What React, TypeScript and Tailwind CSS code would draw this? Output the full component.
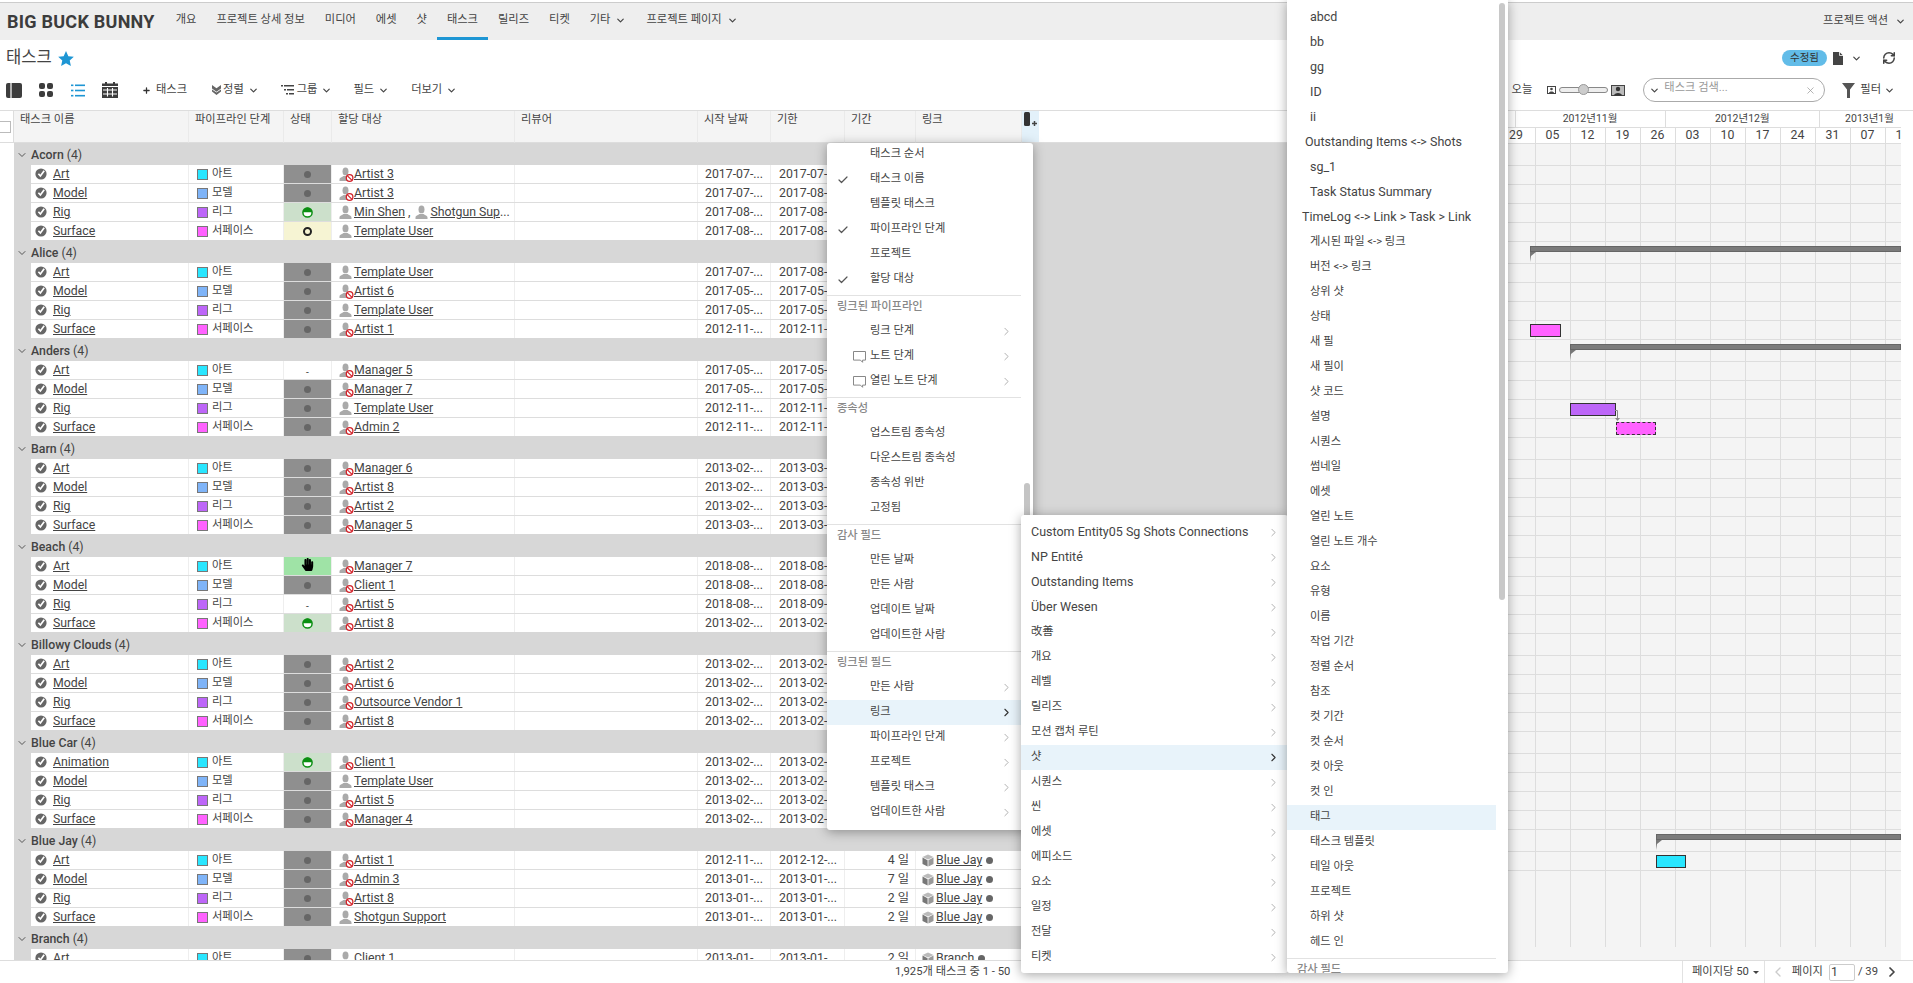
import { type ReactNode } from "react";
import { Check, ChevronDown, ChevronRight, ChevronLeft, RefreshCw, X, Plus } from "lucide-react";
import { FaHandPaper } from "react-icons/fa";

type Status = "off" | "ip" | "wtg" | "hover" | "na";
type Step = "art" | "model" | "rig" | "surface";
type Row = { name: string; step: Step; status?: Status; who: string; blocked?: boolean; start: string; due: string; days?: string; link?: string; who2?: string };
type Group = { name: string; rows: Row[] };

const steps: Record<Step, { label: string; swatch: string }> = {
  art: { label: "아트", swatch: "bg-[#29e6ff]" },
  model: { label: "모델", swatch: "bg-[#7fb4f8]" },
  rig: { label: "리그", swatch: "bg-[#bd66f8]" },
  surface: { label: "서페이스", swatch: "bg-[#ff62ff]" },
};

function four(
  who: [string, boolean, Status?][],
  dates: [string, string][],
  extra?: { days: string; link: string }[],
  first = "Art",
): Row[] {
  const names = [first, "Model", "Rig", "Surface"];
  const keys: Step[] = ["art", "model", "rig", "surface"];
  return who.map((w, i) => ({
    name: names[i], step: keys[i], who: w[0], blocked: w[1], status: w[2],
    start: dates[i][0], due: dates[i][1], days: extra?.[i].days, link: extra?.[i].link,
  }));
}

const same = (a: string, b: string): [string, string][] => [[a, b], [a, b], [a, b], [a, b]];

const groups: Group[] = [
  { name: "Acorn", rows: (() => {
    const r = four(
      [["Artist 3", true], ["Artist 3", true], ["Min Shen", false, "ip"], ["Template User", false, "wtg"]],
      [["2017-07", "2017-07"], ["2017-07", "2017-08"], ["2017-08", "2017-08"], ["2017-08", "2017-08"]],
    );
    r[2].who2 = "Shotgun Sup";
    return r;
  })() },
  { name: "Alice", rows: four(
    [["Template User", false], ["Artist 6", true], ["Template User", false], ["Artist 1", true]],
    [["2017-07", "2017-08"], ["2017-05", "2017-05"], ["2017-05", "2017-05"], ["2012-11", "2012-11"]],
  ) },
  { name: "Anders", rows: four(
    [["Manager 5", true, "na"], ["Manager 7", true], ["Template User", false], ["Admin 2", true]],
    [["2017-05", "2017-05"], ["2017-05", "2017-05"], ["2012-11", "2012-11"], ["2012-11", "2012-11"]],
  ) },
  { name: "Barn", rows: four(
    [["Manager 6", true], ["Artist 8", true], ["Artist 2", true], ["Manager 5", true]],
    [["2013-02", "2013-03"], ["2013-02", "2013-03"], ["2013-02", "2013-03"], ["2013-03", "2013-03"]],
  ) },
  { name: "Beach", rows: four(
    [["Manager 7", true, "hover"], ["Client 1", true], ["Artist 5", true, "na"], ["Artist 8", true, "ip"]],
    [["2018-08", "2018-08"], ["2018-08", "2018-08"], ["2018-08", "2018-09"], ["2013-02", "2013-02"]],
  ) },
  { name: "Billowy Clouds", rows: four(
    [["Artist 2", true], ["Artist 6", true], ["Outsource Vendor 1", true], ["Artist 8", true]],
    same("2013-02", "2013-02"),
  ) },
  { name: "Blue Car", rows: four(
    [["Client 1", true, "ip"], ["Template User", false], ["Artist 5", true], ["Manager 4", true]],
    same("2013-02", "2013-02"), undefined, "Animation",
  ) },
  { name: "Blue Jay", rows: four(
    [["Artist 1", true], ["Admin 3", true], ["Artist 8", true], ["Shotgun Support", false]],
    [["2012-11", "2012-12"], ["2013-01", "2013-01"], ["2013-01", "2013-01"], ["2013-01", "2013-01"]],
    [{ days: "4 일", link: "Blue Jay" }, { days: "7 일", link: "Blue Jay" }, { days: "2 일", link: "Blue Jay" }, { days: "2 일", link: "Blue Jay" }],
  ) },
  // only the first Branch row is on screen before the footer
  { name: "Branch", rows: [
    { name: "Art", step: "art", who: "Client 1", start: "2013-01", due: "2013-01", days: "2 일", link: "Branch" },
  ] },
];

type MenuEntry = { t: string; check?: boolean; more?: boolean; note?: boolean; head?: boolean; on?: boolean; shift?: string };

const fieldMenu: MenuEntry[] = [
  { t: "태스크 순서" }, { t: "태스크 이름", check: true }, { t: "템플릿 태스크" },
  { t: "파이프라인 단계", check: true }, { t: "프로젝트" }, { t: "할당 대상", check: true },
  { t: "링크된 파이프라인", head: true },
  { t: "링크 단계", more: true }, { t: "노트 단계", more: true, note: true }, { t: "열린 노트 단계", more: true, note: true },
  { t: "종속성", head: true },
  { t: "업스트림 종속성" }, { t: "다운스트림 종속성" }, { t: "종속성 위반" }, { t: "고정됨" },
  { t: "감사 필드", head: true },
  { t: "만든 날짜" }, { t: "만든 사람" }, { t: "업데이트 날짜" }, { t: "업데이트한 사람" },
  { t: "링크된 필드", head: true },
  { t: "만든 사람", more: true }, { t: "링크", more: true, on: true }, { t: "파이프라인 단계", more: true },
  { t: "프로젝트", more: true }, { t: "템플릿 태스크", more: true }, { t: "업데이트한 사람", more: true },
];

const linkMenu = [
  "Custom Entity05 Sg Shots Connections", "NP Entité", "Outstanding Items", "Über Wesen", "改善", "개요", "레벨", "릴리즈",
  "모션 캡처 루틴", "샷", "시퀀스", "씬", "에셋", "에피소드", "요소", "일정", "전달", "티켓",
];

const shotMenu: MenuEntry[] = [
  { t: "abcd" }, { t: "bb" }, { t: "gg" }, { t: "ID" }, { t: "ii" },
  { t: "Outstanding Items <-> Shots", shift: "-ml-[5px]" }, { t: "sg_1" }, { t: "Task Status Summary" },
  { t: "TimeLog <-> Link > Task > Link", shift: "-ml-[8px]" }, { t: "게시된 파일 <-> 링크" }, { t: "버전 <-> 링크" },
  { t: "상위 샷" }, { t: "상태" }, { t: "새 필" }, { t: "새 필이" }, { t: "샷 코드" }, { t: "설명" }, { t: "시퀀스" },
  { t: "썸네일" }, { t: "에셋" }, { t: "열린 노트" }, { t: "열린 노트 개수" }, { t: "요소" }, { t: "유형" }, { t: "이름" },
  { t: "작업 기간" }, { t: "정렬 순서" }, { t: "참조" }, { t: "컷 기간" }, { t: "컷 순서" }, { t: "컷 아웃" }, { t: "컷 인" },
  { t: "태그", on: true }, { t: "태스크 템플릿" }, { t: "테일 아웃" }, { t: "프로젝트" }, { t: "하위 샷" }, { t: "헤드 인" },
  { t: "감사 필드", head: true },
];

const navItems = ["개요", "프로젝트 상세 정보", "미디어", "에셋", "샷", "태스크", "릴리즈", "티켓", "기타", "프로젝트 페이지"];
const headers = [
  { t: "태스크 이름", w: "w-[175px]" }, { t: "파이프라인 단계", w: "w-[95px]" }, { t: "상태", w: "w-[48px]" },
  { t: "할당 대상", w: "w-[183px]" }, { t: "리뷰어", w: "w-[183px]" }, { t: "시작 날짜", w: "w-[73px]" },
  { t: "기한", w: "w-[74px]" }, { t: "기간", w: "w-[71px]" }, { t: "링크", w: "w-[106px]" },
];
const weeks = ["29", "05", "12", "19", "26", "03", "10", "17", "24", "31", "07", "14"];

const kr = "text-[11.25px]";
const en = "text-[12.3px]";
const sized = (t: string) => (/[가-힣改善]/.test(t) ? kr : "text-[12.5px]");

function Caret() {
  return <ChevronDown size={11} strokeWidth={2.6} className="shrink-0 text-[#444]" />;
}

function TaskIcon() {
  return (
    <svg width="12" height="12" viewBox="0 0 12 12" className="shrink-0">
      <circle cx="6" cy="6" r="5.6" fill="#666" />
      <path d="M3.4 5.8 5.4 8 9.2 2.8" fill="none" stroke="#fff" strokeWidth="1.7" />
    </svg>
  );
}

function Person({ blocked }: { blocked?: boolean }) {
  return (
    <svg width="15" height="15" viewBox="0 0 15 15" className="shrink-0">
      <ellipse cx="6.5" cy="4.4" rx="3" ry="3.9" fill="#aaa" />
      <path d="M0.5 14v-1.6c0-1.8 3-2.4 4-3.4h4c1 1 4 1.6 4 3.4V14z" fill="#aaa" />
      {blocked && (
        <g>
          <circle cx="10.6" cy="11" r="3.3" fill="#fff" stroke="#d2232a" strokeWidth="1.3" />
          <path d="M8.4 8.8 12.8 13.2" stroke="#d2232a" strokeWidth="1.2" />
        </g>
      )}
    </svg>
  );
}

function Cube() {
  return (
    <svg width="12" height="13" viewBox="0 0 12 13" className="shrink-0">
      <path d="M6 .5 11.5 3 6 5.6.5 3z" fill="#bbb" />
      <path d="M.5 3.6 5.6 6.2v6.3L.5 10z" fill="#777" />
      <path d="M11.5 3.6 6.4 6.2v6.3L11.5 10z" fill="#999" />
    </svg>
  );
}

function HalfDot() {
  return (
    <svg width="11" height="11" viewBox="0 0 11 11">
      <circle cx="5.5" cy="5.5" r="4.6" fill="#fff" stroke="#0b8f12" strokeWidth="1.5" />
      <path d="M.9 5.2a4.6 4.6 0 0 1 9.2 0z" fill="#0b8f12" />
    </svg>
  );
}

function StatusCell({ status = "off" }: { status?: Status }) {
  const base = "flex w-[48px] shrink-0 items-center justify-center border-r border-[#eee]";
  if (status === "ip") return <div className={`${base} bg-[#cce0cb]`}><HalfDot /></div>;
  if (status === "wtg") return <div className={`${base} bg-[#f6f4d3]`}><span className="h-[9px] w-[9px] rounded-full border-2 border-[#222]" /></div>;
  if (status === "hover") return <div className={`${base} bg-[#9fe3a6]`}><FaHandPaper size={13} className="-mt-[4px] text-black" /></div>;
  if (status === "na") return <div className={`${base} bg-white pt-[4px] text-[10px] text-[#444]`}>-</div>;
  return <div className={`${base} bg-[#8f8f8f]`}><span className="h-[7px] w-[7px] rounded-full bg-[#666]" /></div>;
}

function TaskRow({ row }: { row: Row }) {
  const step = steps[row.step];
  return (
    <div className={`ml-[17px] flex h-[19px] w-[991px] border-b border-[#ddd] bg-white ${en} text-[#444] last:border-[#d7d7d7]`}>
      <div className="flex w-[158px] shrink-0 items-center gap-[6px] border-r border-[#eee] pl-[4px]">
        <TaskIcon />
        <span className="pt-[1px] underline">{row.name}</span>
      </div>
      <div className="flex w-[95px] shrink-0 items-center gap-[4px] border-r border-[#eee] pl-[8px]">
        <span className={`h-[11px] w-[11px] border border-[#777] ${step.swatch}`} />
        <span className={kr}>{step.label}</span>
      </div>
      <StatusCell status={row.status} />
      <div className="flex w-[183px] shrink-0 items-center overflow-hidden whitespace-nowrap border-r border-[#eee] pl-[7px]">
        <Person blocked={row.blocked} />
        <span className="pt-[1px] underline">{row.who}</span>
        {row.who2 && (
          <>
            <span className="ml-[3px] mr-[5px]">,</span>
            <Person />
            <span className="pt-[1px] underline">{row.who2}</span>...
          </>
        )}
      </div>
      <div className="w-[183px] shrink-0 border-r border-[#eee]" />
      <div className="flex w-[73px] shrink-0 items-center border-r border-[#eee] pl-[7px] pt-[1px]">{row.start}-...</div>
      <div className="flex w-[74px] shrink-0 items-center border-r border-[#eee] pl-[8px] pt-[1px]">{row.due}-...</div>
      <div className="flex w-[71px] shrink-0 items-center justify-end border-r border-[#eee] pr-[6px]">{row.days}</div>
      <div className="flex w-[106px] shrink-0 items-center pl-[6px]">
        {row.link && (
          <>
            <Cube />
            <span className="ml-[2px] pt-[1px] underline">{row.link}</span>
            <span className="ml-[4px] h-[7px] w-[7px] rounded-full bg-[#666]" />
          </>
        )}
      </div>
    </div>
  );
}

function GroupBlock({ group }: { group: Group }) {
  return (
    <div>
      <div className={`flex h-[22px] items-center pt-[2px] ${en} text-[#444]`}>
        <ChevronDown size={12} strokeWidth={2} className="ml-[2px] text-[#555]" />
        <span className="ml-[3px] font-medium">{group.name}</span>
        <span className="ml-[3px]">(4)</span>
      </div>
      {group.rows.map((r, i) => <TaskRow key={i} row={r} />)}
    </div>
  );
}

function NoteIcon() {
  return (
    <svg width="13" height="12" viewBox="0 0 13 12">
      <path d="M.5.5h12v8.6H9.6v2.2L7.4 9.1H.5z" fill="#fff" stroke="#888" />
    </svg>
  );
}

function MenuHead({ t, inset }: { t: string; inset: string }) {
  return (
    <div className={`mt-[3px] flex h-[24px] items-center border-t border-[#e2e2e2] ${inset} ${kr} font-medium text-[#888]`}>{t}</div>
  );
}

function FieldItem({ e }: { e: MenuEntry }) {
  if (e.head) return <MenuHead t={e.t} inset="pl-[10px]" />;
  return (
    <div className={`flex h-[25px] shrink-0 items-center ${kr} text-[#444] ${e.on ? "bg-[#e8f3fa]" : ""}`}>
      <div className={`flex w-[43px] shrink-0 items-center ${e.note ? "justify-end pr-[4px]" : "pl-[10px]"}`}>
        {e.check && <Check size={12} strokeWidth={2.4} className="text-[#555]" />}
        {e.note && <NoteIcon />}
      </div>
      <span className="flex-1">{e.t}</span>
      {e.more && <ChevronRight size={13} strokeWidth={e.on ? 2 : 1.4} className={`mr-[8px] ${e.on ? "text-[#333]" : "text-[#999]"}`} />}
    </div>
  );
}

function FieldMenu() {
  return (
    <div className="absolute left-[827px] top-[143px] z-10 h-[687px] w-[206px] overflow-hidden rounded-[3px] bg-white shadow-[0_2px_12px_rgba(0,0,0,0.35)]">
      <div className="-mt-[1px] w-[194px]">
        {fieldMenu.map((e, i) => <FieldItem key={i} e={e} />)}
      </div>
      <div className="absolute left-[197px] top-[340px] h-[40px] w-[6px] rounded-full bg-[#c4c4c4]" />
    </div>
  );
}

function LinkMenu() {
  return (
    <div className="absolute left-[1021px] top-[515px] z-20 h-[458px] w-[267px] rounded-[3px] bg-white pt-[5px] shadow-[0_2px_12px_rgba(0,0,0,0.35)]">
      {linkMenu.map((t) => (
        <div key={t} className={`flex h-[25px] items-center pl-[10px] text-[#444] ${sized(t)} ${t === "샷" ? "bg-[#e8f3fa]" : ""}`}>
          <span className="flex-1">{t}</span>
          <ChevronRight size={13} strokeWidth={t === "샷" ? 2 : 1.4} className={`mr-[8px] ${t === "샷" ? "text-[#333]" : "text-[#999]"}`} />
        </div>
      ))}
    </div>
  );
}

function ShotMenu() {
  return (
    <div className="absolute left-[1287px] top-0 z-30 h-[973px] w-[221px] overflow-hidden rounded-b-[3px] bg-white pt-[5px] shadow-[0_2px_12px_rgba(0,0,0,0.35)]">
      <div className="w-[209px]">
        {shotMenu.map((e) => e.head ? (
          <MenuHead key={e.t} t={e.t} inset="pl-[10px]" />
        ) : (
          <div key={e.t} className={`flex h-[25px] items-center whitespace-nowrap pl-[23px] text-[#444] ${sized(e.t)} ${e.on ? "bg-[#e8f3fa]" : ""}`}>
            <span className={e.shift}>{e.t}</span>
          </div>
        ))}
      </div>
      <div className="absolute left-[212px] top-[3px] h-[597px] w-[6px] rounded-full bg-[#c8c8c8]" />
    </div>
  );
}

function Summary({ left }: { left: string }) {
  return (
    <div className={`absolute right-0 top-[4px] h-[16px] ${left}`}>
      <div className="h-[6px] border border-[#666] bg-[#7b7b7b]" />
      <svg width="6" height="10" viewBox="0 0 6 10" className="block">
        <path d="M0 0h6L1 4 0 10z" fill="#777" />
      </svg>
    </div>
  );
}

const ganttMarks: Record<string, ReactNode> = {
  "1-g": <Summary left="left-[22px]" />,
  "1-3": <div className="absolute left-[22px] top-[3px] h-[13px] w-[31px] border border-[#333] bg-[#ff62ff]" />,
  "2-g": <Summary left="left-[62px]" />,
  "2-2": (
    <>
      <div className="absolute left-[62px] top-[3px] h-[13px] w-[46px] border border-[#333] bg-[#bd66f8]" />
      <svg width="6" height="12" viewBox="0 0 6 12" className="absolute left-[107px] top-[10px] z-[1]">
        <path d="M0 .5h2.5V9" fill="none" stroke="#888" />
        <path d="M0 8h5L2.5 11z" fill="#888" />
      </svg>
    </>
  ),
  "2-3": <div className="absolute left-[108px] top-[3px] h-[13px] w-[40px] border border-dashed border-[#333] bg-[#ff62ff]" />,
  "7-g": <Summary left="left-[148px]" />,
  "7-0": <div className="absolute left-[148px] top-[3px] h-[13px] w-[30px] border border-[#333] bg-[#29e6ff]" />,
};

const ganttRows = groups.slice(0, 8).flatMap((g, gi) => [
  { key: `${gi}-g`, h: "h-[22px]" },
  ...g.rows.map((_, ri) => ({ key: `${gi}-${ri}`, h: "h-[19px]" })),
]).slice(0, 37);

function Gantt() {
  return (
    <div className="flex w-[393px] shrink-0 flex-col">
      <div className="flex h-[17px] border-b border-[#ddd] text-[10.5px] text-[#444]">
        <div className="w-[7.5px] border-r border-[#ddd]" />
        <div className="flex w-[150px] items-center justify-center border-r border-[#ddd]">2012년11월</div>
        <div className="flex w-[154.5px] items-center justify-center border-r border-[#ddd]">2012년12월</div>
        <div className="flex flex-1 items-center justify-center pl-[18px]">2013년1월</div>
      </div>
      <div className={`flex h-[16px] overflow-hidden border-b border-[#ddd] ${en} text-[#444]`}>
        {weeks.map((w, i) => (
          <div key={w} className={`flex h-full shrink-0 items-center border-r border-[#ddd] ${i === 0 ? "w-[27.5px] pl-[1px]" : "w-[35px] justify-center"}`}>{w}</div>
        ))}
      </div>
      <div className="relative flex-1 overflow-hidden bg-[#f4f4f4]">
        <div className="absolute left-0 top-0 flex h-[803px]">
          {weeks.map((w, i) => (
            <div key={w} className={`h-full shrink-0 border-r border-[#ddd] ${i === 0 ? "w-[27.5px]" : "w-[35px]"}`} />
          ))}
        </div>
        {ganttRows.map((r) => (
          <div key={r.key} className={`relative border-b border-[#ddd] ${r.h}`}>{ganttMarks[r.key]}</div>
        ))}
      </div>
    </div>
  );
}

function ToolbarIcons() {
  return (
    <>
      <svg width="16" height="15" viewBox="0 0 16 15" className="shrink-0">
        <rect width="16" height="15" rx="2" fill="#3d3d3d" />
        <rect x="4.4" width="1.2" height="15" fill="#fff" />
      </svg>
      <svg width="14" height="14" viewBox="0 0 14 14" className="ml-[17px] shrink-0" fill="#3d3d3d">
        <rect width="6" height="6" rx="2" />
        <rect x="8" width="6" height="6" rx="2" />
        <rect y="8" width="6" height="6" rx="2" />
        <rect x="8" y="8" width="6" height="6" rx="2" />
      </svg>
      <svg width="14" height="13" viewBox="0 0 14 13" className="ml-[18px] shrink-0" fill="#1e96d4">
        <rect width="2.4" height="1.6" y="0.5" />
        <rect x="4" width="10" height="1.6" y="0.5" />
        <rect width="2.4" height="1.6" y="5.7" />
        <rect x="4" width="10" height="1.6" y="5.7" />
        <rect width="2.4" height="1.6" y="10.9" />
        <rect x="4" width="10" height="1.6" y="10.9" />
      </svg>
      <svg width="16" height="16" viewBox="0 0 16 16" className="ml-[17px] shrink-0">
        <rect y="1.5" width="16" height="14.5" fill="#3d3d3d" />
        <rect x="3" width="2" height="3" fill="#3d3d3d" />
        <rect x="11" width="2" height="3" fill="#3d3d3d" />
        <path d="M0 4.5h16M1 8h14M1 12h14M5.5 6v8.5M10.5 6v8.5" stroke="#fff" strokeWidth="1.1" fill="none" />
      </svg>
    </>
  );
}

function Toolbar() {
  return (
    <div className={`flex h-[34px] shrink-0 items-center pb-[6px] pl-[6px] pr-[18px] ${kr} text-[#444]`}>
      <ToolbarIcons />
      <Plus size={9} strokeWidth={3.4} className="ml-[24px] shrink-0 text-[#333]" />
      <span className="ml-[5px]">태스크</span>
      <svg width="9" height="10" viewBox="0 0 9 10" className="ml-[25px] shrink-0">
        <path d="M0 0 4.5 3.2 9 0v3.5L4.5 6.8 0 3.5z" fill="#666" />
        <path d="M0 4.5 4.5 7.4 9 4.5v2L4.5 10 0 6.5z" fill="#666" />
      </svg>
      <span className="ml-[2px]">정렬</span>
      <span className="ml-[4px]"><Caret /></span>
      <svg width="13" height="10" viewBox="0 0 13 10" className="ml-[22px] shrink-0" fill="#444">
        <rect width="2" height="1.5" />
        <rect x="3" width="10" height="1.5" />
        <rect x="3" y="4" width="2" height="1.5" />
        <rect x="6" y="4" width="7" height="1.5" />
        <rect x="5" y="8" width="2" height="1.5" />
        <rect x="8" y="8" width="5" height="1.5" />
      </svg>
      <span className="ml-[3px]">그룹</span>
      <span className="ml-[4px]"><Caret /></span>
      <span className="ml-[21px]">필드</span>
      <span className="ml-[4px]"><Caret /></span>
      <span className="ml-[22px]">더보기</span>
      <span className="ml-[4px]"><Caret /></span>

      <span className="ml-auto">오늘</span>
      <svg width="9" height="8" viewBox="0 0 9 8" className="ml-[15px] shrink-0">
        <rect x=".5" y=".5" width="8" height="7" fill="#fff" stroke="#444" />
        <circle cx="4.5" cy="3" r="1.3" fill="#444" />
        <path d="M2 7c0-2 5-2 5 0z" fill="#444" />
      </svg>
      <div className="relative ml-[3px] h-[6px] w-[49px] rounded-full border border-[#888] bg-[#eee]">
        <span className="absolute left-[18px] -top-[4px] h-[11px] w-[11px] rounded-full border border-[#999] bg-[#ccc]" />
      </div>
      <svg width="14" height="11" viewBox="0 0 14 11" className="ml-[3px] shrink-0">
        <rect x=".5" y=".5" width="13" height="10" fill="#bbb" stroke="#444" />
        <circle cx="7" cy="4" r="2.2" fill="#333" />
        <path d="M3 10.5c0-3.4 8-3.4 8 0z" fill="#333" />
      </svg>
      <div className="ml-[18px] flex h-[24px] w-[182px] items-center rounded-full border border-[#aaa] pl-[5px] pr-[8px]">
        <Caret />
        <span className="ml-[4px] -mt-[3px] flex-1 text-[#999]">태스크 검색...</span>
        <X size={11} strokeWidth={1.6} className="text-[#999]" />
      </div>
      <svg width="13" height="15" viewBox="0 0 13 15" className="ml-[17px] shrink-0">
        <path d="M0 0h13L8 6.5V15H5V6.5z" fill="#555" />
      </svg>
      <span className="ml-[5px]">필터</span>
      <span className="ml-[3px]"><Caret /></span>
    </div>
  );
}

export default function App() {
  return (
    <div className="relative flex h-[983px] w-[1913px] flex-col overflow-hidden bg-white font-['Roboto','Noto_Sans_CJK_KR',sans-serif] text-[#444]">
      {/* Nav */}
      <div className="mt-[2px] flex h-[38px] shrink-0 items-center border-t border-[#ccc] bg-[#eeeeee] pl-[7px] pr-[7px]">
        <span className="whitespace-nowrap text-[18px] font-bold tracking-[0.25px] text-[#3c3c3c]">BIG BUCK BUNNY</span>
        <div className="ml-[11px] flex h-full">
          {navItems.map((t) => (
            <div key={t} className={`flex h-full items-center gap-[5px] border-b-[3px] px-[10px] ${kr} ${t === "태스크" ? "border-[#1e96d4]" : "border-transparent"}`}>
              {t}
              {(t === "기타" || t === "프로젝트 페이지") && <Caret />}
            </div>
          ))}
        </div>
        <div className={`ml-auto flex items-center gap-[7px] ${kr}`}>프로젝트 액션 <Caret /></div>
      </div>

      {/* Title */}
      <div className="flex h-[36px] shrink-0 items-center pl-[6px] pr-[17px]">
        <span className="text-[16.6px] leading-none">태스크</span>
        <svg width="16" height="15" viewBox="0 0 24 23" className="ml-[6px]">
          <path d="M12 0l3.6 8 8.4.9-6.3 5.6 1.8 8.5L12 18.600 4.500 23l1.800-8.500L0 8.900 8.400 8z" fill="#1e96d4" />
        </svg>
        <span className="ml-auto flex h-[16px] w-[45px] items-center justify-center rounded-full bg-[#62bce8] text-[10.5px] text-[#333]">수정됨</span>
        <svg width="10" height="13" viewBox="0 0 10 13" className="ml-[6px]">
          <path d="M0 0h6.500L10 3.500V13H0z" fill="#444" />
          <path d="M6.500 0v3.500H10" fill="none" stroke="#fff" strokeWidth=".8" />
        </svg>
        <span className="ml-[8px]"><Caret /></span>
        <RefreshCw size={14} strokeWidth={2.6} className="ml-[20px] text-[#444]" />
      </div>

      <Toolbar />

      {/* Table + gantt */}
      <div className="flex min-h-0 flex-1 border-t border-[#ddd]">
        <div className="flex w-[1508px] shrink-0 flex-col">
          <div className={`flex h-[32px] shrink-0 ${kr}`}>
            <div className="w-[14px] shrink-0 border-b border-r border-[#ddd] bg-white pt-[10px]">
              <div className="h-[12px] w-[11px] border border-l-0 border-[#bbb]" />
            </div>
            {headers.map((h) => (
              <div key={h.t} className={`${h.w} shrink-0 border-b border-r border-b-[#ddd] border-r-[#eaeaea] bg-[#f4f4f4] pl-[6px] pt-[1px] leading-[16px]`}>{h.t}</div>
            ))}
            <div className="flex w-[17px] shrink-0 border-b border-[#ddd] bg-[#e3f1fa] pl-[2px] pt-[1px]">
              <svg width="14" height="16" viewBox="0 0 14 16">
                <rect width="6" height="14" rx="1.500" fill="#333" />
                <path d="M8 11.500h5M10.500 9v5" stroke="#444" strokeWidth="1.500" />
              </svg>
            </div>
            <div className="flex-1 border-b border-[#ddd] bg-white" />
          </div>
          <div className="flex min-h-0 flex-1 overflow-hidden">
            <div className="w-[14px] shrink-0 bg-white" />
            <div className="flex-1 bg-[#d7d7d7]">
              {groups.map((g) => <GroupBlock key={g.name} group={g} />)}
            </div>
          </div>
        </div>
        <Gantt />
      </div>

      {/* Footer */}
      <div className={`flex h-[23px] shrink-0 items-center border-t border-[#ddd] ${kr}`}>
        <span className="ml-[895px]">1,925개 태스크 중 1 - 50</span>
        <div className="ml-auto flex h-full items-center pr-[13px]">
          <div className="flex h-full items-center border-x border-[#e2e2e2] pl-[9px] pr-[5px]">
            페이지당 50
            <span className="ml-[4px] h-0 w-0 border-x-[3px] border-t-[3px] border-x-transparent border-t-[#444]" />
          </div>
          <ChevronLeft size={16} strokeWidth={2} className="ml-[5px] text-[#ccc]" />
          <span className="ml-[6px]">페이지</span>
          <div className={`ml-[6px] h-[17px] w-[26px] rounded-[2px] border border-[#ccc] pl-[1px] leading-[15px] ${en}`}>1</div>
          <span className="ml-[3px]">/ 39</span>
          <ChevronRight size={16} strokeWidth={2.6} className="ml-[6px] text-[#444]" />
        </div>
      </div>

      <FieldMenu />
      <LinkMenu />
      <ShotMenu />
    </div>
  );
}
